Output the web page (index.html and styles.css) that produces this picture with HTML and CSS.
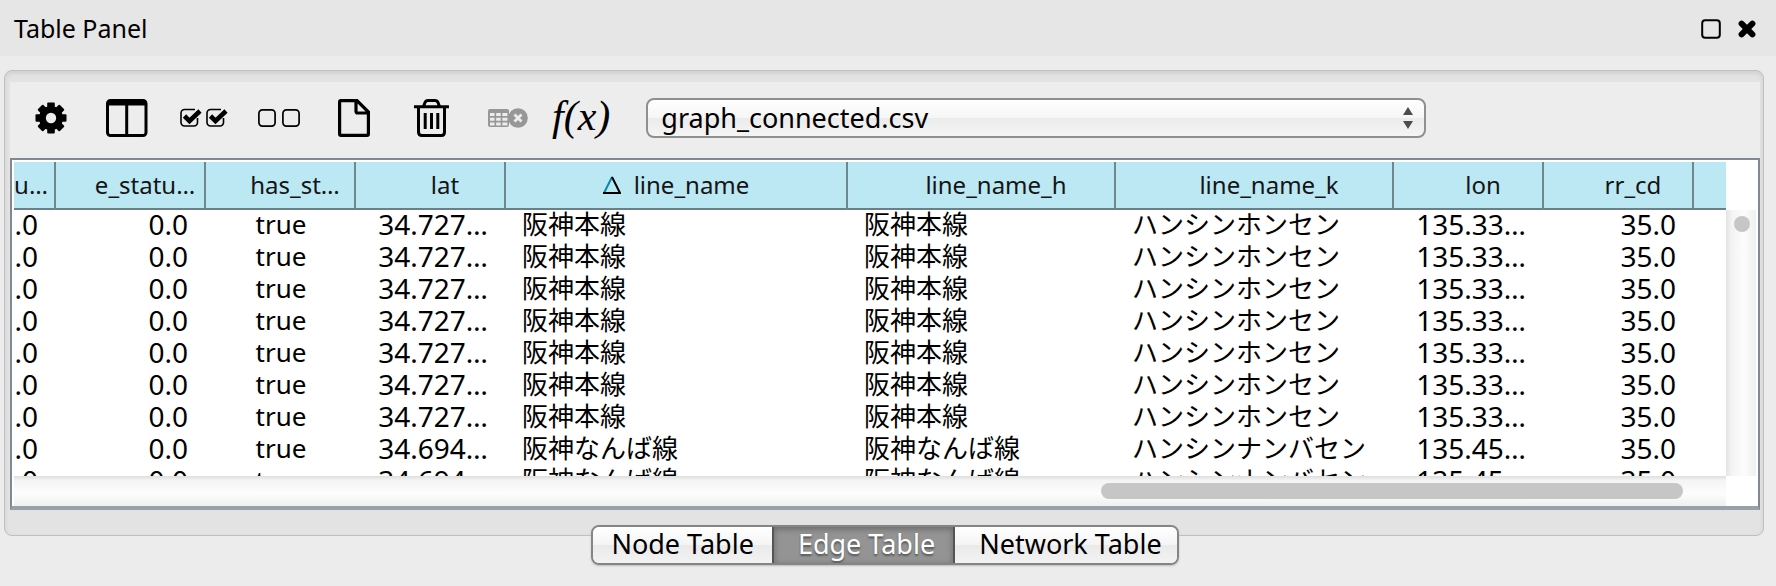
FILE: index.html
```
<!DOCTYPE html>
<html lang="en">
<head>
<meta charset="utf-8">
<title>Table Panel</title>
<link rel="stylesheet" href="styles.css">
</head>
<body>
<header class="titlebar">
  <h1 class="title">Table Panel</h1>
  <div class="window-actions">
    <button class="icon-button" type="button" aria-label="Float panel">
      <svg width="20" height="20" viewBox="0 0 20 20"><rect x="1.2" y="1.2" width="17.6" height="17.6" rx="3" fill="none" stroke="#000" stroke-width="2"/></svg>
    </button>
    <button class="icon-button" type="button" aria-label="Close panel">
      <svg width="20" height="20" viewBox="0 0 20 20"><path d="M4.600 4.600L15.400 15.400M15.400 4.600L4.600 15.400" fill="none" stroke="#000" stroke-width="6" stroke-linecap="round"/></svg>
    </button>
  </div>
</header>
<main class="panel">
  <div class="toolbar">
    <button class="icon-button tool gear" type="button" aria-label="Settings">
      <svg width="32" height="32" viewBox="-16 -16 32 32"><g fill="#000"><rect x="-3.800" y="-15.500" width="7.600" height="31" rx="1"/><rect x="-3.800" y="-15.500" width="7.600" height="31" rx="1" transform="rotate(45)"/><rect x="-3.800" y="-15.500" width="7.600" height="31" rx="1" transform="rotate(90)"/><rect x="-3.800" y="-15.500" width="7.600" height="31" rx="1" transform="rotate(135)"/><circle r="12"/></g><circle r="5.200" fill="#ededed"/></svg>
    </button>
    <button class="icon-button tool columns" type="button" aria-label="Show columns">
      <svg width="42" height="38" viewBox="0 0 42 38"><rect x="1.500" y="1.500" width="38.500" height="35" rx="3" fill="none" stroke="#000" stroke-width="3"/><path d="M1 3h40v3.500H1zM19.200 4h3v32h-3z"/></svg>
    </button>
    <button class="icon-button tool checks" type="button" aria-label="Select all">
      <svg width="48" height="20" viewBox="0 0 48 20"><g id="check"><path d="M15 1.500H4.500a3.500 3.500 0 0 0-3.500 3.500v9.500a3.500 3.500 0 0 0 3.500 3.500H14a3.500 3.500 0 0 0 3.500-3.500V10" fill="none" stroke="#000" stroke-width="1.600"/><path d="M4.500 8l5 5L20 3" fill="none" stroke="#000" stroke-width="4.600"/></g><use href="#check" x="26"/></svg>
    </button>
    <button class="icon-button tool boxes" type="button" aria-label="Select none">
      <svg width="42" height="18" viewBox="0 0 42 18"><g fill="none" stroke="#000" stroke-width="1.700"><rect x=".9" y=".9" width="16.200" height="16.200" rx="3.500"/><rect x="24.900" y=".9" width="16.200" height="16.200" rx="3.500"/></g></svg>
    </button>
    <button class="icon-button tool file" type="button" aria-label="New column">
      <svg width="32" height="38" viewBox="0 0 32 38"><path d="M2.500 1.600H19L30.400 13v22a1.400 1.400 0 0 1-1.400 1.400H3A1.400 1.400 0 0 1 1.600 35V2.500a1 1 0 0 1 .9-.9zM18 2v10.500a1.500 1.500 0 0 0 1.500 1.500H30" fill="none" stroke="#000" stroke-width="3.200"/></svg>
    </button>
    <button class="icon-button tool trash" type="button" aria-label="Delete column">
      <svg width="36" height="38" viewBox="0 0 36 38"><g fill="none" stroke="#000" stroke-width="3"><path d="M0 7.700h35" /><path d="M9.500 7.500l1.500-4q.8-2 3-2h7q2.200 0 3 2l1.500 4M4.500 8v25q0 3.500 3.500 3.500h19.500q3 0 3-3.500V8"/><path d="M11.200 14v16M17.500 14v16M23.800 14v16" stroke-width="3"/></g></svg>
    </button>
    <button class="icon-button tool table-x" type="button" aria-label="Delete table" disabled>
      <svg width="40" height="20" viewBox="0 0 40 20"><path d="M2 1h17a2 2 0 0 1 2 2v14a2 2 0 0 1-2 2H2a2 2 0 0 1-2-2V3a2 2 0 0 1 2-2z" fill="#979797"/><g fill="#ededed"><path d="M2 5h4.500v3H2zM8.200 5h4.500v3H8.200zM14.400 5h5v3h-5zM2 9.700h4.500v3H2zM8.200 9.700h4.500v3H8.200zM14.400 9.700h5v3h-5zM2 14.400h4.500v3H2zM8.200 14.400h4.500v3H8.200zM14.400 14.400h5v3h-5z"/></g><circle cx="30" cy="10" r="9.800" fill="#979797"/><path d="M26.500 6.500l7 7M33.500 6.500l-7 7" stroke="#ededed" stroke-width="2.800"/></svg>
    </button>
    <button class="icon-button tool fx" type="button">f(x)</button>
    <div class="picker">
      <select class="picker-select" aria-label="Table"><option>graph_connected.csv</option></select>
      <svg class="picker-arrows" width="10" height="22" viewBox="0 0 10 22"><path d="M5 0l5 8H0zM5 22l5-8H0z" fill="#4c4c4c"/></svg>
    </div>
  </div>
  <div class="grid">
    <div class="viewport">
      <table class="data">
        <colgroup><col class="c-cut"><col class="c-num"><col class="c-num"><col class="c-num"><col class="c-name"><col class="c-name-h"><col class="c-name-k"><col class="c-num"><col class="c-num"><col></colgroup>
        <thead>
          <tr><th class="cut">u…</th><th>e_statu…</th><th>has_st…</th><th>lat</th><th class="sorted"><svg class="sort" width="18" height="18" viewBox="0 0 18 18"><path d="M1 17L9 1" stroke="#0a86a8" stroke-width="2"/><path d="M9 1l8 16H0" fill="none" stroke="#000" stroke-width="2"/></svg>line_name</th><th>line_name_h</th><th>line_name_k</th><th>lon</th><th>rr_cd</th><th></th></tr>
        </thead>
        <tbody>
          <tr><td class="num">.0</td><td class="num">0.0</td><td class="bool">true</td><td class="num">34.727…</td><td>阪神本線</td><td>阪神本線</td><td>ハンシンホンセン</td><td class="num">135.33…</td><td class="num">35.0</td><td></td></tr>
          <tr><td class="num">.0</td><td class="num">0.0</td><td class="bool">true</td><td class="num">34.727…</td><td>阪神本線</td><td>阪神本線</td><td>ハンシンホンセン</td><td class="num">135.33…</td><td class="num">35.0</td><td></td></tr>
          <tr><td class="num">.0</td><td class="num">0.0</td><td class="bool">true</td><td class="num">34.727…</td><td>阪神本線</td><td>阪神本線</td><td>ハンシンホンセン</td><td class="num">135.33…</td><td class="num">35.0</td><td></td></tr>
          <tr><td class="num">.0</td><td class="num">0.0</td><td class="bool">true</td><td class="num">34.727…</td><td>阪神本線</td><td>阪神本線</td><td>ハンシンホンセン</td><td class="num">135.33…</td><td class="num">35.0</td><td></td></tr>
          <tr><td class="num">.0</td><td class="num">0.0</td><td class="bool">true</td><td class="num">34.727…</td><td>阪神本線</td><td>阪神本線</td><td>ハンシンホンセン</td><td class="num">135.33…</td><td class="num">35.0</td><td></td></tr>
          <tr><td class="num">.0</td><td class="num">0.0</td><td class="bool">true</td><td class="num">34.727…</td><td>阪神本線</td><td>阪神本線</td><td>ハンシンホンセン</td><td class="num">135.33…</td><td class="num">35.0</td><td></td></tr>
          <tr><td class="num">.0</td><td class="num">0.0</td><td class="bool">true</td><td class="num">34.727…</td><td>阪神本線</td><td>阪神本線</td><td>ハンシンホンセン</td><td class="num">135.33…</td><td class="num">35.0</td><td></td></tr>
          <tr><td class="num">.0</td><td class="num">0.0</td><td class="bool">true</td><td class="num">34.694…</td><td>阪神なんば線</td><td>阪神なんば線</td><td>ハンシンナンバセン</td><td class="num">135.45…</td><td class="num">35.0</td><td></td></tr>
          <tr><td class="num">.0</td><td class="num">0.0</td><td class="bool">true</td><td class="num">34.694…</td><td>阪神なんば線</td><td>阪神なんば線</td><td>ハンシンナンバセン</td><td class="num">135.45…</td><td class="num">35.0</td><td></td></tr>
        </tbody>
      </table>
    </div>
    <div class="vscroll"><div class="vthumb"></div></div>
    <div class="hscroll"><div class="hthumb"></div></div>
  </div>
</main>
<nav class="tabs">
  <button class="tab node" type="button">Node Table</button>
  <button class="tab active" type="button" aria-pressed="true">Edge Table</button>
  <button class="tab network" type="button">Network Table</button>
</nav>
</body>
</html>
```
FILE: styles.css
```
* { box-sizing: border-box; }

body {
  margin: 0;
  height: 100vh;
  display: flex;
  flex-direction: column;
  background: #ececec;
  color: #000;
  font: 24px/32px "Noto Sans", "Noto Sans CJK JP", sans-serif;
}

button, select { font: inherit; color: inherit; }

.titlebar {
  display: flex;
  align-items: center;
  justify-content: space-between;
  height: 56px;
  flex: none;
  padding: 0 19px 0 14px;
  background: #e6e6e6;
}
.title { margin: 0; font-size: 25px; font-weight: 400; }
.window-actions { display: flex; gap: 16px; padding-top: 1px; }

.icon-button {
  display: flex;
  align-items: center;
  padding: 0;
  border: 0;
  background: none;
}

.panel {
  flex: 1;
  min-height: 0;
  display: flex;
  flex-direction: column;
  margin: 14px 12px 0 4px;
  padding: 11px 3px 25px 5px;
  border: 1px solid #c0c0c0;
  border-radius: 8px;
  background: #e3e3e3;
  box-shadow: inset 0 2px 4px #cdcdcd;
}

.toolbar {
  flex: none;
  display: flex;
  align-items: center;
  height: 76px;
  padding: 0 20px 4px 25px;
  background: #ededed;
}
.tool { flex: none; }
.gear { margin-right: 39px; }
.columns { margin-right: 32px; }
.checks { margin-right: 30px; }
.boxes { margin-right: 38px; }
.file { margin-right: 44px; }
.trash { margin-right: 38px; }
.table-x { margin-right: 24px; }
.fx {
  margin-right: 36px;
  padding-bottom: 4px;
  font: italic 42px/40px "Liberation Serif", serif;
}

.picker { position: relative; flex: 0 1 780px; min-width: 0; }
.picker-select {
  display: block;
  width: 100%;
  height: 40px;
  padding: 0 40px 1px 13px;
  appearance: none;
  border: 2px solid #8f8f8f;
  border-radius: 8px;
  background: linear-gradient(#fff, #f6f6f6 50%, #ebebeb 50%, #f4f4f4);
  font-size: 27px;
  line-height: 34px;
}
.picker-arrows {
  position: absolute;
  right: 13px;
  top: 9px;
  pointer-events: none;
}

.grid {
  flex: 1;
  min-height: 0;
  display: grid;
  grid-template: minmax(0, 1fr) 30px / minmax(0, 1fr) 30px;
  padding: 2px 2px 0;
  border: 2px solid #7f8993;
  border-bottom: 4px solid #97a1aa;
  background: #fff;
}
.viewport { overflow: hidden; }

.data {
  width: 100%;
  min-width: 1690px;
  table-layout: fixed;
  border-collapse: separate;
  border-spacing: 0;
}
.c-cut { width: 42px; }
.c-num { width: 150px; }
.c-name { width: 342px; }
.c-name-h { width: 268px; }
.c-name-k { width: 278px; }

.data th {
  height: 48px;
  padding: 0 0 0 30px;
  border-right: 2px solid #6f878d;
  border-bottom: 2px solid #6b8086;
  background: #bbe8f3;
  color: #151515;
  font-weight: 400;
  white-space: nowrap;
}
.data th.cut { padding: 0 6px 0 0; }
.data th.sorted { padding: 0; }
.data th:last-child { border-right: 0; }
.sort { margin-right: 13px; }

.data td {
  height: 32px;
  padding: 0 0 4px 16px;
  font-size: 26px;
  line-height: 28px;
  white-space: nowrap;
}
.data .num { padding: 0 18px 4px 0; text-align: right; font-size: 28px; }
.data .bool { padding: 0 0 4px; text-align: center; }

.vscroll {
  margin-top: 48px;
  padding: 6px 8px;
  background: linear-gradient(90deg, #e4e4e4, #f4f4f4 20%, #fcfcfc 60%, #f0f0f0);
}
.vthumb { width: 16px; height: 16px; border-radius: 8px; background: #c6c6c6; }
.hscroll {
  padding: 7px 0;
  background: linear-gradient(#dedede, #f4f4f4 15%, #fdfdfd 60%, #efefef);
}
.hthumb {
  width: 34%;
  height: 16px;
  margin-left: 63.5%;
  border-radius: 8px;
  background: #c6c6c6;
}

/* The segmented control straddles the lower edge of the panel. */
.tabs {
  position: relative;
  flex: none;
  display: flex;
  align-self: center;
  margin: -11px 6px 21px 0;
  border: 2px solid #858585;
  border-radius: 8px;
  overflow: hidden;
  box-shadow: 0 1px 2px #bbb;
}
.tab {
  height: 36px;
  padding: 0 18px 2px;
  border: 0;
  background: linear-gradient(#fff, #f4f4f4 50%, #eaeaea 50%, #f2f2f2);
  font-size: 27px;
  line-height: 32px;
}
.tab.active {
  padding: 0 18px 2px 24px;
  border: solid #555;
  border-width: 0 2px;
  background: #949494;
  box-shadow: inset 0 2px 6px #686868;
  color: #fff;
  text-shadow: 0 2px 2px #555;
}
.tab.network { padding: 0 15px 2px 24px; }
```
